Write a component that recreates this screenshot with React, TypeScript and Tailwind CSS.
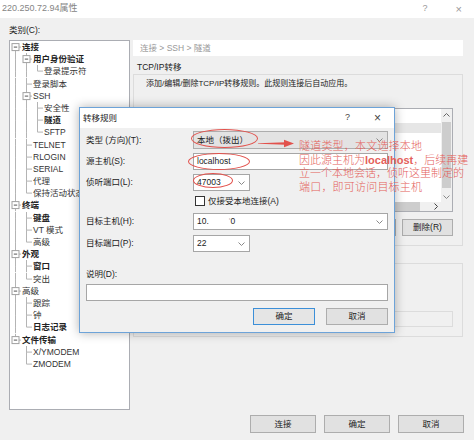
import React from 'react';

type Node = { label: string; d: number; bold?: boolean; exp?: boolean; last?: boolean };

const TREE: Node[] = [
  { label: '连接', d: 0, bold: true, exp: true },
  { label: '用户身份验证', d: 1, bold: true, exp: true },
  { label: '登录提示符', d: 2, last: true },
  { label: '登录脚本', d: 1 },
  { label: 'SSH', d: 1, exp: true },
  { label: '安全性', d: 2 },
  { label: '隧道', d: 2, bold: true },
  { label: 'SFTP', d: 2, last: true },
  { label: 'TELNET', d: 1 },
  { label: 'RLOGIN', d: 1 },
  { label: 'SERIAL', d: 1 },
  { label: '代理', d: 1 },
  { label: '保持活动状态', d: 1, last: true },
  { label: '终端', d: 0, bold: true, exp: true },
  { label: '键盘', d: 1, bold: true },
  { label: 'VT 模式', d: 1 },
  { label: '高级', d: 1, last: true },
  { label: '外观', d: 0, bold: true, exp: true },
  { label: '窗口', d: 1, bold: true },
  { label: '突出', d: 1, last: true },
  { label: '高级', d: 0, exp: true },
  { label: '跟踪', d: 1 },
  { label: '钟', d: 1 },
  { label: '日志记录', d: 1, bold: true, last: true },
  { label: '文件传输', d: 0, bold: true, exp: true, last: true },
  { label: 'X/YMODEM', d: 1 },
  { label: 'ZMODEM', d: 1, last: true },
];

// work out which ancestor lines keep running down through each row
const ROWS = (() => {
  const open: boolean[] = [];
  return TREE.map((n, i) => {
    const anc = open.slice(0, n.d);
    open[n.d] = !n.last;
    return { ...n, anc, first: i === 0 };
  });
})();

const LINE = '#b4b4b4';

const Cell = ({ up, down, tick, box }: { up?: boolean; down?: boolean; tick?: boolean; box?: boolean }) => (
  <svg width="11" height="12.2" viewBox="0 0 11 12.2" className="shrink-0">
    {up && <line x1="5.5" y1="0" x2="5.5" y2="6.1" stroke={LINE} strokeWidth="1" />}
    {down && <line x1="5.5" y1="6.1" x2="5.5" y2="12.2" stroke={LINE} strokeWidth="1" />}
    {tick && <line x1="5.5" y1="6.1" x2="11" y2="6.1" stroke={LINE} strokeWidth="1" />}
    {box && (
      <>
        <rect x="2" y="2.6" width="7" height="7" fill="#fff" stroke="#a0a0a0" strokeWidth="1" />
        <line x1="3.8" y1="6.1" x2="7.2" y2="6.1" stroke="#555" strokeWidth="1" />
      </>
    )}
  </svg>
);

const Chevron = () => (
  <svg width="7" height="4" viewBox="0 0 7 4" className="shrink-0">
    <polyline points="0.5,0.5 3.5,3.5 6.5,0.5" fill="none" stroke="#888" strokeWidth="1" />
  </svg>
);

const Btn = ({ children, w = 'w-[66px]', focus }: { children: React.ReactNode; w?: string; focus?: boolean }) => (
  <div
    className={`flex h-full items-center justify-center border ${w} ${
      focus ? 'border-[#3c8fd8] bg-[#e5e5e5]' : 'border-[#adadad] bg-[#e1e1e1]'
    }`}
  >
    {children}
  </div>
);

export default function App() {
  return (
    <div className="relative h-[440px] w-[474px] overflow-hidden bg-[#f0f0f0] font-['Liberation_Sans','Noto_Sans_CJK_SC',sans-serif] text-[8.5px] text-[#222]">
      {/* title bar */}
      <div className="flex h-[18px] items-center justify-between bg-white pl-[2px] pr-[12px] text-[9px] text-[#858585]">
        <span>220.250.72.94属性</span>
        <div className="flex items-center gap-[28px] text-[#999]">
          <span>?</span>
          <span className="text-[11px]">×</span>
        </div>
      </div>

      <div className="pl-[9px] pr-[10px]">
        <div className="mt-[6px] h-[12px] leading-[12px]">类别(C):</div>

        <div className="mt-[4px] flex h-[370px] gap-[3px]">
          {/* category tree */}
          <div className="w-[121px] shrink-0 overflow-hidden border border-[#abadb3] bg-white">
            {ROWS.map((r, i) => (
              <div key={i} className="flex h-[12.2px] items-center">
                {r.anc.map((c, j) => (
                  <Cell key={j} up={c} down={c} />
                ))}
                <Cell up={!r.first} down={!r.last} tick box={r.exp} />
                <span className={`whitespace-nowrap pl-[1px] leading-[12.2px] ${r.bold ? 'font-bold' : 'text-[#333]'}`}>{r.label}</span>
              </div>
            ))}
          </div>

          {/* settings page */}
          <div className="flex w-[330px] flex-col">
            <div className="flex h-[16px] items-center bg-white pl-[7px] text-[#999]">连接 &gt; SSH &gt; 隧道</div>

            <div className="mt-[5px] h-[13px] pl-[4px] leading-[13px]">TCP/IP转移</div>
            <div className="flex flex-col border border-[#dcdcdc] pb-[9px] pl-[12px] pr-[9px] pt-[3px]">
              <div className="h-[12px] text-[8px] leading-[12px]">添加/编辑/删除TCP/IP转移规则。此规则连接后自动应用。</div>
              <div className="mt-[18px] flex h-[104px] flex-col border border-[#abadb3] bg-white">
                <div className="flex flex-1">
                  <div className="flex-1 pt-[14px]">
                    <div className="h-[10px] bg-[#e6e6e6]" />
                  </div>
                  <div className="flex w-[11px] flex-col items-center bg-[#f0f0f0]">
                    <div className="flex h-[11px] items-center">
                      <svg width="7" height="4" viewBox="0 0 7 4">
                        <polyline points="0.5,3.5 3.5,0.5 6.5,3.5" fill="none" stroke="#666" strokeWidth="1" />
                      </svg>
                    </div>
                    <div className="mt-[2px] h-[66px] w-[9px] bg-[#cdcdcd]" />
                    <div className="mt-[3px] flex h-[11px] items-center">
                      <Chevron />
                    </div>
                  </div>
                </div>
                <div className="flex h-[9px] bg-[#f0f0f0]">
                  <div className="flex-1">
                    <div className="h-full w-[273px] bg-[#cdcdcd]" />
                  </div>
                  <div className="flex w-[10px] items-center justify-center">
                    <svg width="4" height="7" viewBox="0 0 4 7">
                      <polyline points="0.5,0.5 3.5,3.5 0.5,6.5" fill="none" stroke="#444" strokeWidth="1" />
                    </svg>
                  </div>
                  <div className="w-[11px] bg-[#f0f0f0]" />
                </div>
              </div>
              <div className="mt-[7px] flex h-[17px] justify-end gap-[6px]">
                <Btn w="w-[51px]">添加(A)...</Btn>
                <Btn w="w-[51px]">编辑(E)...</Btn>
                <Btn w="w-[51px]">删除(R)</Btn>
              </div>
            </div>

            <div className="mt-[4px] h-[13px] pl-[4px] leading-[13px]">X11转移</div>
            <div className="flex flex-col border border-[#dcdcdc] pb-[9px] pl-[12px] pr-[9px] pt-[47px]">
              <div className="h-[16px] border border-[#dcdcdc] bg-[#f0f0f0]" />
            </div>
          </div>
        </div>

        {/* bottom buttons */}
        <div className="mt-[5px] flex h-[18px] justify-end gap-[8px]">
          <Btn>连接</Btn>
          <Btn>确定</Btn>
          <Btn>取消</Btn>
        </div>
      </div>

      {/* 转移规则 dialog */}
      <div className="absolute left-[79px] top-[107px] flex h-[226px] w-[316px] flex-col border border-[#6da3d8] bg-[#f0f0f0] shadow-[0_0_10px_rgba(0,0,0,0.3)]">
        <div className="flex h-[20px] shrink-0 items-center justify-between bg-white pl-[3px] pr-[13px]">
          <span>转移规则</span>
          <div className="flex items-center gap-[24px] text-[#444]">
            <span className="text-[9px]">?</span>
            <span className="text-[12px]">×</span>
          </div>
        </div>
        <div className="flex flex-col pl-[6px] pr-[6px]">
          <div className="mt-[3px] flex h-[18px] items-center">
            <span className="w-[107px] shrink-0">类型 (方向)(T):</span>
            <div className="flex h-full flex-1 items-center justify-between border border-[#adadad] bg-[#e3e3e3] pl-[3px] pr-[4px]">
              <span>本地（拨出）</span>
              <Chevron />
            </div>
          </div>
          <div className="mt-[4px] flex h-[17px] items-center">
            <span className="w-[107px] shrink-0">源主机(S):</span>
            <div className="flex h-full flex-1 items-center border border-[#a6a6a6] bg-white pl-[3px]">localhost</div>
          </div>
          <div className="mt-[4px] flex h-[17px] items-center">
            <span className="w-[107px] shrink-0">侦听端口(L):</span>
            <div className="flex h-full w-[57px] items-center justify-between border border-[#a6a6a6] bg-white pl-[3px] pr-[4px]">
              <span>47003</span>
              <Chevron />
            </div>
          </div>
          <div className="mt-[5px] flex h-[10px] items-center pl-[109px]">
            <div className="h-[10px] w-[10px] border border-[#333] bg-white" />
            <span className="pl-[3px]">仅接受本地连接(A)</span>
          </div>
          <div className="mt-[7px] flex h-[17px] items-center">
            <span className="w-[107px] shrink-0">目标主机(H):</span>
            <div className="flex h-full flex-1 items-center justify-between border border-[#a6a6a6] bg-white pl-[3px] pr-[4px]">
              <span>
                10.<span className="inline-block w-[20px]" />
                <span className="text-[#bbb]">'</span>0
              </span>
              <Chevron />
            </div>
          </div>
          <div className="mt-[5px] flex h-[17px] items-center">
            <span className="w-[107px] shrink-0">目标端口(P):</span>
            <div className="flex h-full w-[57px] items-center justify-between border border-[#a6a6a6] bg-white pl-[3px] pr-[4px]">
              <span>22</span>
              <Chevron />
            </div>
          </div>
          <div className="mt-[16px] h-[12px] leading-[12px]">说明(D):</div>
          <div className="mt-[4px] h-[17px] border border-[#a6a6a6] bg-white" />
          <div className="mt-[7px] flex h-[17px] justify-end gap-[11px]">
            <Btn w="w-[62px]" focus>
              确定
            </Btn>
            <Btn w="w-[62px]">取消</Btn>
          </div>
        </div>
      </div>

      {/* red annotation */}
      <div className="absolute left-[191px] top-[129px] h-[19px] w-[67px] rounded-[50%] border border-[#e2514c]" />
      <div className="absolute left-[188px] top-[153px] h-[17px] w-[62px] rounded-[50%] border border-[#e2514c]" />
      <div className="absolute left-[193px] top-[173px] h-[15px] w-[40px] rounded-[50%] border border-[#e2514c]" />
      <svg className="absolute left-[258px] top-[139px]" width="38" height="9" viewBox="0 0 38 9">
        <polygon points="0,4.2 28,3.2 28,5.8 0,4.8" fill="#e2514c" />
        <polygon points="26,0.8 36,4.5 26,8.2" fill="#e2514c" />
      </svg>
      <div className="absolute left-[299px] top-[140px] whitespace-nowrap font-['Liberation_Serif','Noto_Sans_CJK_SC',serif] text-[11px] font-light leading-[13.7px] text-[#e4605a]">
        <div className="tracking-[0.2px]">隧道类型，本文选择本地</div>
        <div>
          因此源主机为<span className="font-['Liberation_Sans',sans-serif] font-semibold">localhost</span>，后续再建
        </div>
        <div>立一个本地会话，侦听这里制定的</div>
        <div className="tracking-[0.2px]">端口，即可访问目标主机</div>
      </div>
    </div>
  );
}
